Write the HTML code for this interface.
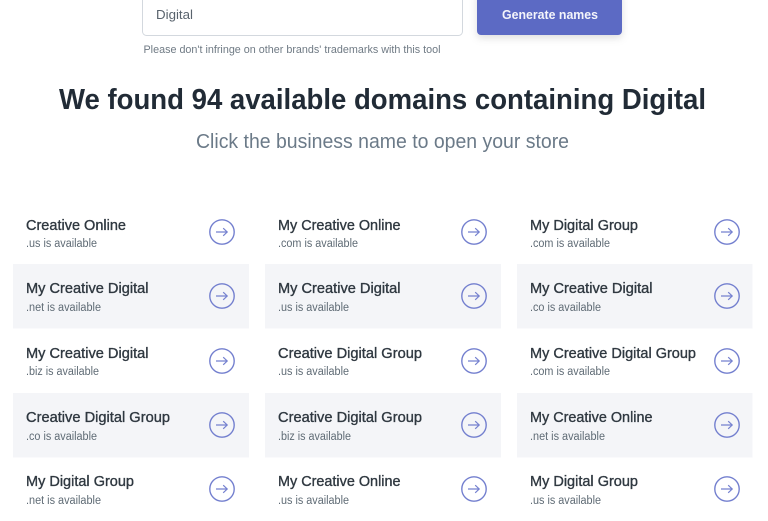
<!DOCTYPE html>
<html lang="en"><head><meta charset="utf-8"><title>Business name results</title>
<style>
html,body{margin:0;padding:0;background:#fff;width:768px;height:521px;overflow:hidden}
svg{display:block;font-family:"Liberation Sans",sans-serif}
.t{font-size:14.5px;fill:#2f3840;stroke:#2f3840;stroke-width:.35px}
.s{font-size:11.5px;fill:#5f6b75}
.c{fill:none;stroke:#7480cf;stroke-width:1.4}
.a{fill:none;stroke:#7480cf;stroke-width:1.2}
</style></head><body>
<svg width="768" height="521" viewBox="0 0 768 521" xmlns="http://www.w3.org/2000/svg">
<defs><filter id="sh" x="-20%" y="-20%" width="140%" height="170%"><feDropShadow dx="0" dy="3" stdDeviation="4" flood-color="#000" flood-opacity=".13"/></filter>
<g id="i"><circle class="c" cx="0" cy="0" r="12.2"/><path class="a" d="M-6 0H5M1.200-3.800 5.200 0 1.200 3.800"/></g></defs>
<rect x="142.500" y="-10" width="320" height="45.500" rx="4" fill="#fff" stroke="#d3d8de"/>
<text x="156" y="19" font-size="13px" fill="#59636d" textLength="37" lengthAdjust="spacingAndGlyphs">Digital</text>
<rect x="477" y="-10" width="145" height="45" rx="4" fill="#5c6ac4" filter="url(#sh)"/>
<text x="502" y="19" font-size="12.500px" font-weight="700" fill="#f4f5fb" textLength="96" lengthAdjust="spacingAndGlyphs">Generate names</text>
<text x="143.500" y="53" font-size="11px" fill="#6f7a84" textLength="297" lengthAdjust="spacingAndGlyphs">Please don't infringe on other brands' trademarks with this tool</text>
<text x="59" y="109" font-size="29px" font-weight="700" fill="#212b36" textLength="647" lengthAdjust="spacingAndGlyphs">We found 94 available domains containing Digital</text>
<text x="196" y="148" font-size="20px" fill="#6b7a88" textLength="373" lengthAdjust="spacingAndGlyphs">Click the business name to open your store</text>
<rect x="13" y="264" width="236" height="64.500" fill="#f4f5f8"/><rect x="265" y="264" width="236" height="64.500" fill="#f4f5f8"/><rect x="517" y="264" width="235.500" height="64.500" fill="#f4f5f8"/>
<rect x="13" y="393" width="236" height="64.500" fill="#f4f5f8"/><rect x="265" y="393" width="236" height="64.500" fill="#f4f5f8"/><rect x="517" y="393" width="235.500" height="64.500" fill="#f4f5f8"/>
<text class="t" x="26" y="230" textLength="100" lengthAdjust="spacingAndGlyphs">Creative Online</text><text class="s" x="26" y="247" textLength="71" lengthAdjust="spacingAndGlyphs">.us is available</text><use href="#i" x="222" y="232"/>
<text class="t" x="278" y="230" textLength="122.500" lengthAdjust="spacingAndGlyphs">My Creative Online</text><text class="s" x="278" y="247" textLength="80" lengthAdjust="spacingAndGlyphs">.com is available</text><use href="#i" x="474" y="232"/>
<text class="t" x="530" y="230" textLength="108" lengthAdjust="spacingAndGlyphs">My Digital Group</text><text class="s" x="530" y="247" textLength="80" lengthAdjust="spacingAndGlyphs">.com is available</text><use href="#i" x="727" y="232"/>
<text class="t" x="26" y="293" textLength="122.500" lengthAdjust="spacingAndGlyphs">My Creative Digital</text><text class="s" x="26" y="311" textLength="75" lengthAdjust="spacingAndGlyphs">.net is available</text><use href="#i" x="222" y="296"/>
<text class="t" x="278" y="293" textLength="122.500" lengthAdjust="spacingAndGlyphs">My Creative Digital</text><text class="s" x="278" y="311" textLength="71" lengthAdjust="spacingAndGlyphs">.us is available</text><use href="#i" x="474" y="296"/>
<text class="t" x="530" y="293" textLength="122.500" lengthAdjust="spacingAndGlyphs">My Creative Digital</text><text class="s" x="530" y="311" textLength="71" lengthAdjust="spacingAndGlyphs">.co is available</text><use href="#i" x="727" y="296"/>
<text class="t" x="26" y="358" textLength="122.500" lengthAdjust="spacingAndGlyphs">My Creative Digital</text><text class="s" x="26" y="375" textLength="73" lengthAdjust="spacingAndGlyphs">.biz is available</text><use href="#i" x="222" y="361"/>
<text class="t" x="278" y="358" textLength="144" lengthAdjust="spacingAndGlyphs">Creative Digital Group</text><text class="s" x="278" y="375" textLength="71" lengthAdjust="spacingAndGlyphs">.us is available</text><use href="#i" x="474" y="361"/>
<text class="t" x="530" y="358" textLength="166" lengthAdjust="spacingAndGlyphs">My Creative Digital Group</text><text class="s" x="530" y="375" textLength="80" lengthAdjust="spacingAndGlyphs">.com is available</text><use href="#i" x="727" y="361"/>
<text class="t" x="26" y="422" textLength="144" lengthAdjust="spacingAndGlyphs">Creative Digital Group</text><text class="s" x="26" y="440" textLength="71" lengthAdjust="spacingAndGlyphs">.co is available</text><use href="#i" x="222" y="425"/>
<text class="t" x="278" y="422" textLength="144" lengthAdjust="spacingAndGlyphs">Creative Digital Group</text><text class="s" x="278" y="440" textLength="73" lengthAdjust="spacingAndGlyphs">.biz is available</text><use href="#i" x="474" y="425"/>
<text class="t" x="530" y="422" textLength="122.500" lengthAdjust="spacingAndGlyphs">My Creative Online</text><text class="s" x="530" y="440" textLength="75" lengthAdjust="spacingAndGlyphs">.net is available</text><use href="#i" x="727" y="425"/>
<text class="t" x="26" y="486" textLength="108" lengthAdjust="spacingAndGlyphs">My Digital Group</text><text class="s" x="26" y="504" textLength="75" lengthAdjust="spacingAndGlyphs">.net is available</text><use href="#i" x="222" y="489"/>
<text class="t" x="278" y="486" textLength="122.500" lengthAdjust="spacingAndGlyphs">My Creative Online</text><text class="s" x="278" y="504" textLength="71" lengthAdjust="spacingAndGlyphs">.us is available</text><use href="#i" x="474" y="489"/>
<text class="t" x="530" y="486" textLength="108" lengthAdjust="spacingAndGlyphs">My Digital Group</text><text class="s" x="530" y="504" textLength="71" lengthAdjust="spacingAndGlyphs">.us is available</text><use href="#i" x="727" y="489"/>
</svg>
</body></html>
